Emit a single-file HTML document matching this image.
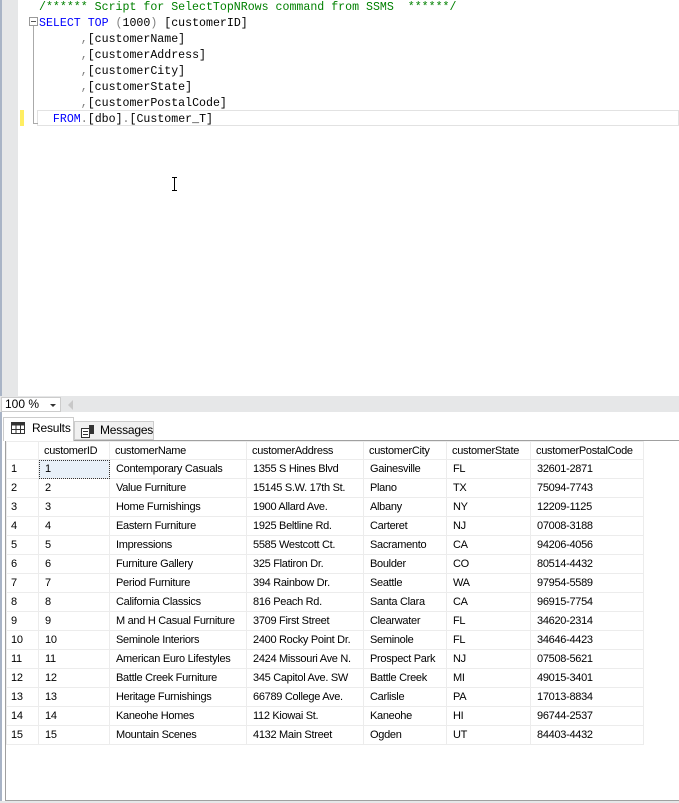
<!DOCTYPE html>
<html><head><style>
*{margin:0;padding:0;box-sizing:border-box}
body{width:679px;height:803px;position:relative;background:#fff;overflow:hidden;font-family:"Liberation Sans",sans-serif}
.gut{position:absolute;left:0;top:0;width:18px;height:396px;background:#e6e7e8;border-left:2px solid #a9b4c6}
.code{position:absolute;left:39px;top:0px;font-family:"Liberation Mono",monospace;font-size:11.6px;line-height:16px;white-space:pre;color:#000}
.c{color:#008000}.k{color:#0000ff}.g{color:#808080}
.hl{position:absolute;left:37px;top:110px;width:642px;height:16px;border:1px solid #e2e2e2}
.ym{position:absolute;left:20px;top:110px;width:4px;height:16px;background:#ffee62}
.fold{position:absolute;left:29px;top:17px;width:9px;height:9px;border:1px solid #999;background:#fff}
.fold:after{content:"";position:absolute;left:1px;top:3px;width:5px;height:1px;background:#555}
.vl{position:absolute;left:33px;top:26px;width:1px;height:98px;background:#aaa}
.vt{position:absolute;left:33px;top:123px;width:5px;height:1px;background:#aaa}
.zb{position:absolute;left:0;top:396px;width:679px;height:16px;background:#e6e7e8}
.zd{position:absolute;left:1px;top:397px;width:60px;height:15px;background:#fff;border:1px solid #ccc;font-size:12px;line-height:13px;padding-left:3px}
.zd:after{content:"";position:absolute;right:4px;top:6px;border:3px solid transparent;border-top:3px solid #333}
.sa{position:absolute;left:68px;top:400px;border:5px solid transparent;border-right:5px solid #c8c8c8;border-left:0}
.lb{position:absolute;left:0;top:412px;width:2px;height:391px;background:#a9b4c6}
.tab{position:absolute;font-size:12px;line-height:20px;letter-spacing:-0.2px}
.t1{left:3px;top:417px;width:71px;height:24px;background:#fff;border:1px solid #ccc;border-bottom:none;padding-left:28px;z-index:2}
.t2{left:74px;top:421px;width:80px;height:19px;background:#f0f0f0;border:1px solid #ccc;padding-left:25px;line-height:17px}
.pane{position:absolute;left:5px;top:440px;width:680px;height:361px;border:1px solid #a0a0a0;border-right:none;background:#fff}
.below{position:absolute;left:0;top:801px;width:679px;height:2px;background:#e6e7e8}
table{position:absolute;left:6px;top:441px;border-collapse:collapse;font-size:11px;letter-spacing:-0.3px;table-layout:fixed;width:637px}
td{height:19px;border:1px solid #ececec;padding:0 0 0 6px;white-space:nowrap;vertical-align:middle;overflow:hidden}
tr.h td{height:18px;padding-left:5px}
td.n{padding-left:4px}
</style></head><body>
<div class="gut"></div>
<div class="hl"></div><div class="ym"></div>
<div class="fold"></div><div class="vl"></div><div class="vt"></div>
<div class="code"><span class="c">/****** Script for SelectTopNRows command from SSMS  ******/</span>
<span class="k">SELECT TOP </span><span class="g">(</span>1000<span class="g">)</span> [customerID]
      <span class="g">,</span>[customerName]
      <span class="g">,</span>[customerAddress]
      <span class="g">,</span>[customerCity]
      <span class="g">,</span>[customerState]
      <span class="g">,</span>[customerPostalCode]
  <span class="k">FROM</span><span class="g">.</span>[dbo]<span class="g">.</span>[Customer_T]</div>
<div style="position:absolute;left:174px;top:177px;width:1px;height:14px;background:#000"></div>
<div style="position:absolute;left:172px;top:177px;width:5px;height:1px;background:#000"></div>
<div style="position:absolute;left:172px;top:190px;width:5px;height:1px;background:#000"></div>
<div class="zb"></div>
<div class="zd">100 %</div>
<div class="sa"></div>
<div class="lb"></div>
<div class="pane"></div>
<div class="below"></div>
<div class="tab t2"><svg style="position:absolute;left:6px;top:3px" width="14" height="13"><rect x="0.5" y="3.5" width="8" height="9" fill="#fff" stroke="#333"/><line x1="2" y1="6.5" x2="7" y2="6.5" stroke="#333"/><line x1="2" y1="9.5" x2="7" y2="9.5" stroke="#333"/><rect x="8" y="0" width="5" height="9" fill="#333"/></svg>Messages</div>
<div class="tab t1"><svg style="position:absolute;left:7px;top:4px" width="14" height="12"><rect x="0.5" y="0.5" width="13" height="11" fill="#fff" stroke="#333"/><rect x="0.5" y="0.5" width="13" height="3" fill="#333"/><line x1="5" y1="0" x2="5" y2="12" stroke="#333"/><line x1="9.5" y1="0" x2="9.5" y2="12" stroke="#333"/><line x1="0" y1="7.5" x2="14" y2="7.5" stroke="#333"/></svg>Results</div>
<table>
<colgroup><col style="width:32px"><col style="width:71px"><col style="width:137px"><col style="width:117px"><col style="width:83px"><col style="width:84px"><col style="width:113px"></colgroup>
<tr class="h"><td></td><td>customerID</td><td>customerName</td><td>customerAddress</td><td>customerCity</td><td>customerState</td><td>customerPostalCode</td></tr>
<tr><td class="n">1</td><td style="background:#e8f0f8;outline:1px dotted #333;outline-offset:-1px">1</td><td>Contemporary Casuals</td><td>1355 S Hines Blvd</td><td>Gainesville</td><td>FL</td><td>32601-2871</td></tr>
<tr><td class="n">2</td><td>2</td><td>Value Furniture</td><td>15145 S.W. 17th St.</td><td>Plano</td><td>TX</td><td>75094-7743</td></tr>
<tr><td class="n">3</td><td>3</td><td>Home Furnishings</td><td>1900 Allard Ave.</td><td>Albany</td><td>NY</td><td>12209-1125</td></tr>
<tr><td class="n">4</td><td>4</td><td>Eastern Furniture</td><td>1925 Beltline Rd.</td><td>Carteret</td><td>NJ</td><td>07008-3188</td></tr>
<tr><td class="n">5</td><td>5</td><td>Impressions</td><td>5585 Westcott Ct.</td><td>Sacramento</td><td>CA</td><td>94206-4056</td></tr>
<tr><td class="n">6</td><td>6</td><td>Furniture Gallery</td><td>325 Flatiron Dr.</td><td>Boulder</td><td>CO</td><td>80514-4432</td></tr>
<tr><td class="n">7</td><td>7</td><td>Period Furniture</td><td>394 Rainbow Dr.</td><td>Seattle</td><td>WA</td><td>97954-5589</td></tr>
<tr><td class="n">8</td><td>8</td><td>California Classics</td><td>816 Peach Rd.</td><td>Santa Clara</td><td>CA</td><td>96915-7754</td></tr>
<tr><td class="n">9</td><td>9</td><td>M and H Casual Furniture</td><td>3709 First Street</td><td>Clearwater</td><td>FL</td><td>34620-2314</td></tr>
<tr><td class="n">10</td><td>10</td><td>Seminole Interiors</td><td>2400 Rocky Point Dr.</td><td>Seminole</td><td>FL</td><td>34646-4423</td></tr>
<tr><td class="n">11</td><td>11</td><td>American Euro Lifestyles</td><td>2424 Missouri Ave N.</td><td>Prospect Park</td><td>NJ</td><td>07508-5621</td></tr>
<tr><td class="n">12</td><td>12</td><td>Battle Creek Furniture</td><td>345 Capitol Ave. SW</td><td>Battle Creek</td><td>MI</td><td>49015-3401</td></tr>
<tr><td class="n">13</td><td>13</td><td>Heritage Furnishings</td><td>66789 College Ave.</td><td>Carlisle</td><td>PA</td><td>17013-8834</td></tr>
<tr><td class="n">14</td><td>14</td><td>Kaneohe Homes</td><td>112 Kiowai St.</td><td>Kaneohe</td><td>HI</td><td>96744-2537</td></tr>
<tr><td class="n">15</td><td>15</td><td>Mountain Scenes</td><td>4132 Main Street</td><td>Ogden</td><td>UT</td><td>84403-4432</td></tr>
</table>
</body></html>
